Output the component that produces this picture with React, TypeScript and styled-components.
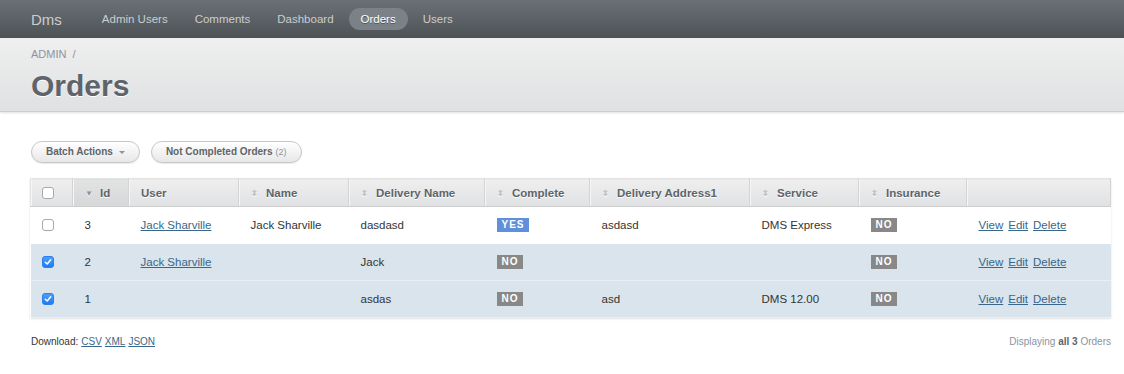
import React from "react";
import styled, { createGlobalStyle } from "styled-components";

const Global = createGlobalStyle`
  html, body { margin: 0; padding: 0; background: #fff; }
  body { font-family: "Liberation Sans", Arial, sans-serif; font-size: 12px; color: #323537; }
`;

const Header = styled.div`
  height: 38px;
  display: flex;
  align-items: center;
  padding: 0 30px;
  background: linear-gradient(to bottom, #6a7176, #4d5256);
  box-shadow: 0 1px 2px rgba(0,0,0,0.3);
`;

const Brand = styled.div`
  font-size: 15px;
  color: #cdcdcd;
  margin-right: 28px;
  padding-left: 1px;
`;

const NavItem = styled.div<{ $active?: boolean }>`
  font-size: 11.5px;
  color: ${(p) => (p.$active ? "#fff" : "#cdcdcd")};
  padding: 0 12px;
  height: 22px;
  line-height: 22px;
  border-radius: 11px;
  margin-right: 3px;
  background: ${(p) => (p.$active ? "#7b8287" : "transparent")};
  text-shadow: ${(p) => (p.$active ? "0 1px 0 rgba(0,0,0,0.4)" : "none")};
`;

const TitleBar = styled.div`
  height: 73px;
  padding: 0 31px;
  background: linear-gradient(to bottom, #efefef, #dfe1e2);
  border-bottom: 1px solid #cdcdcd;
  box-shadow: 0 1px 2px rgba(0,0,0,0.12);
  display: flex;
  flex-direction: column;
`;

const Breadcrumb = styled.div`
  font-size: 11px;
  color: #8a949e;
  margin-top: 9px;
  line-height: 14px;
`;

const Title = styled.h2`
  margin: 7px 0 0;
  font-size: 30px;
  font-weight: bold;
  color: #5e6469;
  line-height: 36px;
  text-shadow: 0 1px 0 #fff;
`;

const Main = styled.div`
  padding: 29px 14px 0 30px;
`;

const ActionBar = styled.div`
  display: flex;
  gap: 11px;
  margin-left: 1px;
  margin-bottom: 15px;
`;

const PillButton = styled.div`
  height: 20px;
  line-height: 20px;
  padding: 0 14px;
  border: 1px solid #c7c7c7;
  border-radius: 11px;
  background: linear-gradient(to bottom, #ffffff, #e7e7e7);
  box-shadow: 0 1px 1px rgba(0,0,0,0.08);
  font-size: 10px;
  font-weight: bold;
  color: #5e6469;
  display: flex;
  align-items: center;
`;

const Count = styled.span`
  font-weight: normal;
  font-size: 9px;
  color: #8a949e;
  margin-left: 3px;
`;

const Caret = styled.span`
  display: inline-block;
  width: 0;
  height: 0;
  border-left: 3px solid transparent;
  border-right: 3px solid transparent;
  border-top: 3px solid #8a949e;
  margin-left: 6px;
  margin-top: 1px;
`;

const Table = styled.table`
  width: 1080px;
  table-layout: fixed;
  border-collapse: collapse;
  box-shadow: 0 1px 2px rgba(0,0,0,0.12);
`;

const Th = styled.th<{ $sorted?: boolean }>`
  height: 27px;
  padding: 0 12px;
  text-align: left;
  font-size: 11.5px;
  font-weight: bold;
  color: #5e6469;
  text-shadow: 0 1px 0 #fff;
  background: ${(p) =>
    p.$sorted
      ? "linear-gradient(to bottom, #e3e3e3, #d5d7d9)"
      : "linear-gradient(to bottom, #efefef, #dfe1e2)"};
  border-top: 1px solid #e4e4e4;
  border-bottom: 1px solid #cdcdcd;
  border-right: 1px solid #d4d4d4;
  box-shadow: inset 1px 0 0 #f6f6f6;
  white-space: nowrap;
  &:first-child { border-left: 1px solid #e4e4e4; }
`;

const SortIcon = styled.span<{ $dir?: "desc" | "none" }>`
  display: inline-block;
  width: 7px;
  margin-right: 8px;
  color: ${(p) => (p.$dir === "desc" ? "#8a949e" : "#c0c3c6")};
  font-size: 8px;
  vertical-align: 1px;
`;

const Tr = styled.tr<{ $selected?: boolean }>`
  background: ${(p) => (p.$selected ? "#d9e4ec" : "#fff")};
  border-bottom: 1px solid ${(p) => (p.$selected ? "#e8eef3" : "#fff")};
`;

const Td = styled.td`
  height: 36px;
  padding: 0 12px;
  font-size: 11.5px;
  color: #323537;
  white-space: nowrap;
  vertical-align: middle;
`;

const Link = styled.a`
  color: #38678b;
  text-decoration: underline;
  margin-right: 5px;
`;

const Badge = styled.span<{ $yes?: boolean }>`
  display: inline-block;
  background: ${(p) => (p.$yes ? "#6090db" : "#888888")};
  color: #fff;
  font-size: 10px;
  font-weight: bold;
  letter-spacing: 1px;
  height: 14px;
  line-height: 14px;
  padding: 0 4px 0 5px;
  vertical-align: middle;
`;

const Box = styled.span<{ $checked?: boolean }>`
  display: inline-flex;
  align-items: center;
  justify-content: center;
  box-sizing: border-box;
  width: 12px;
  height: 12px;
  border-radius: 3px;
  border: 1px solid ${(p) => (p.$checked ? "#2d7ff0" : "#a9a9a9")};
  background: ${(p) => (p.$checked ? "linear-gradient(#4aa0fb, #1d7cf3)" : "#fff")};
  vertical-align: middle;
  margin-left: -1px;
`;

const Footer = styled.div`
  display: flex;
  justify-content: space-between;
  align-items: center;
  margin-top: 17px;
  font-size: 10px;
  line-height: 14px;
  padding-left: 1px;
  width: 1080px;
`;

const SmallLink = styled.a`
  color: #38678b;
  text-decoration: underline;
  margin-left: 3px;
`;

const Info = styled.div`
  color: #8a949e;
  b { color: #5e6469; }
`;

function Check({ checked }: { checked?: boolean }) {
  return (
    <Box $checked={checked}>
      {checked && (
        <svg width="8" height="8" viewBox="0 0 8 8">
          <path d="M1.3 4.2 L3.2 6 L6.7 1.8" stroke="#fff" strokeWidth="1.5" fill="none" strokeLinecap="round" strokeLinejoin="round" />
        </svg>
      )}
    </Box>
  );
}

const cols = [42, 56, 110, 110, 136, 105, 160, 109, 108, 144];

type Row = {
  id: number;
  user?: string;
  name?: string;
  dname: string;
  complete: boolean;
  addr?: string;
  service?: string;
  selected?: boolean;
};

const rows: Row[] = [
  { id: 3, user: "Jack Sharville", name: "Jack Sharville", dname: "dasdasd", complete: true, addr: "asdasd", service: "DMS Express" },
  { id: 2, user: "Jack Sharville", dname: "Jack", complete: false, selected: true },
  { id: 1, dname: "asdas", complete: false, addr: "asd", service: "DMS 12.00", selected: true },
];

export default function App() {
  return (
    <>
      <Global />
      <Header>
        <Brand>Dms</Brand>
        <NavItem>Admin Users</NavItem>
        <NavItem>Comments</NavItem>
        <NavItem>Dashboard</NavItem>
        <NavItem $active>Orders</NavItem>
        <NavItem>Users</NavItem>
      </Header>
      <TitleBar>
        <Breadcrumb>ADMIN &nbsp;/</Breadcrumb>
        <Title>Orders</Title>
      </TitleBar>
      <Main>
        <ActionBar>
          <PillButton>
            Batch Actions <Caret />
          </PillButton>
          <PillButton>
            Not Completed Orders<Count>(2)</Count>
          </PillButton>
        </ActionBar>
        <Table>
          <colgroup>
            {cols.map((w, i) => (
              <col key={i} style={{ width: w }} />
            ))}
          </colgroup>
          <thead>
            <tr>
              <Th><Check /></Th>
              <Th $sorted><SortIcon $dir="desc">▼</SortIcon>Id</Th>
              <Th>User</Th>
              <Th><SortIcon>⬍</SortIcon>Name</Th>
              <Th><SortIcon>⬍</SortIcon>Delivery Name</Th>
              <Th><SortIcon>⬍</SortIcon>Complete</Th>
              <Th><SortIcon>⬍</SortIcon>Delivery Address1</Th>
              <Th><SortIcon>⬍</SortIcon>Service</Th>
              <Th><SortIcon>⬍</SortIcon>Insurance</Th>
              <Th></Th>
            </tr>
          </thead>
          <tbody>
            {rows.map((r) => (
              <Tr key={r.id} $selected={r.selected}>
                <Td><Check checked={r.selected} /></Td>
                <Td>{r.id}</Td>
                <Td>{r.user && <Link>{r.user}</Link>}</Td>
                <Td>{r.name}</Td>
                <Td>{r.dname}</Td>
                <Td><Badge $yes={r.complete}>{r.complete ? "YES" : "NO"}</Badge></Td>
                <Td>{r.addr}</Td>
                <Td>{r.service}</Td>
                <Td><Badge>NO</Badge></Td>
                <Td>
                  <Link>View</Link>
                  <Link>Edit</Link>
                  <Link>Delete</Link>
                </Td>
              </Tr>
            ))}
          </tbody>
        </Table>
        <Footer>
          <div>
            Download:<SmallLink>CSV</SmallLink><SmallLink>XML</SmallLink><SmallLink>JSON</SmallLink>
          </div>
          <Info>
            Displaying <b>all 3</b> Orders
          </Info>
        </Footer>
      </Main>
    </>
  );
}
